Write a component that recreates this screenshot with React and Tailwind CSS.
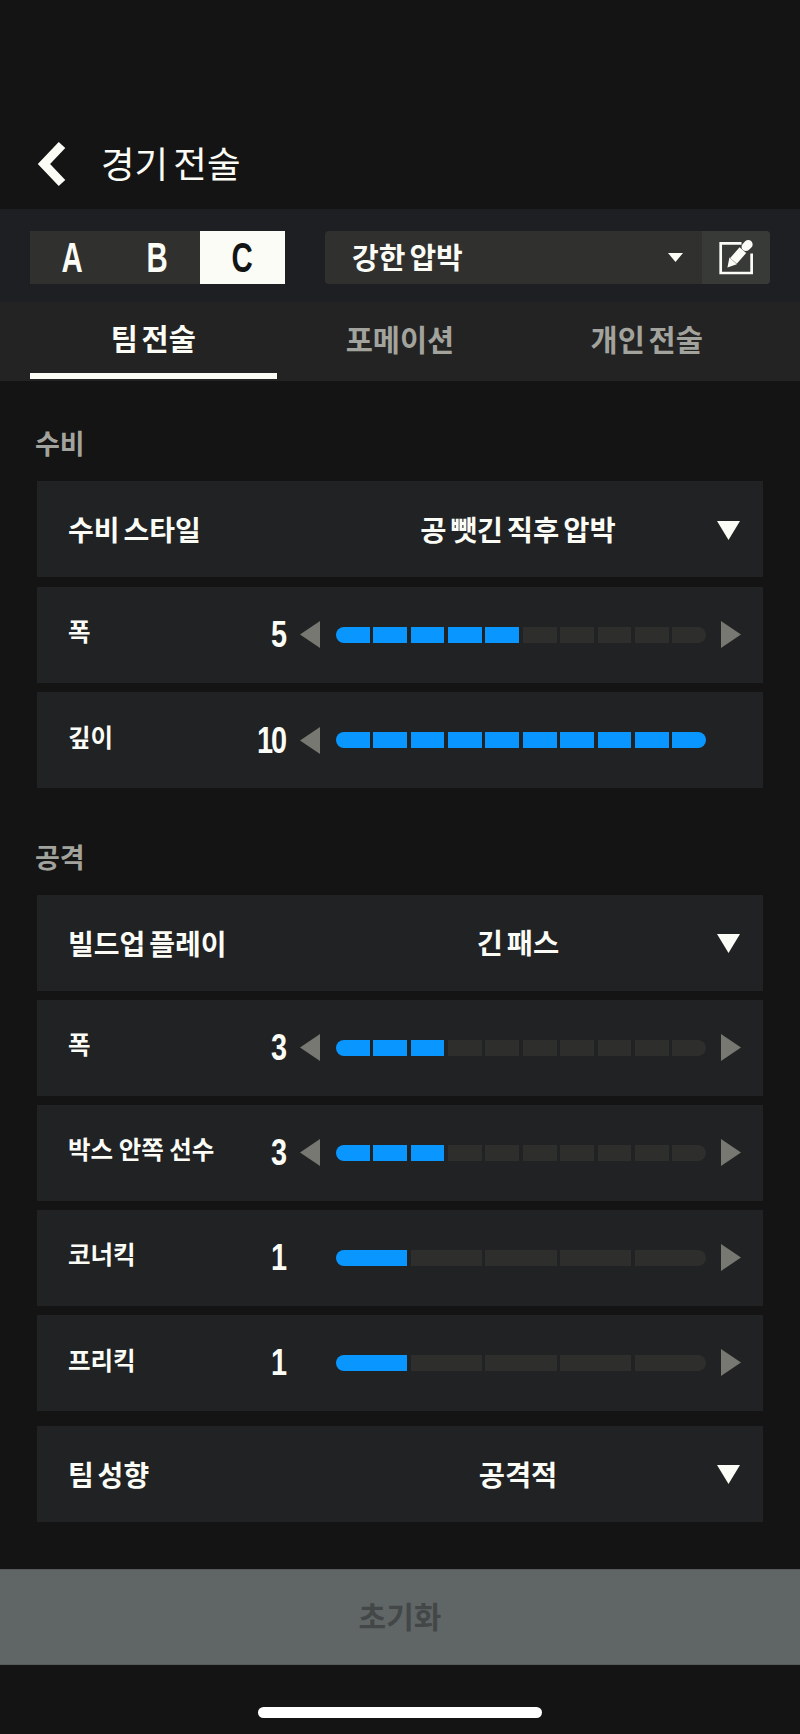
const KR = "font-['Noto_Sans_CJK_KR','Noto_Sans',sans-serif]";
const LATIN = "font-['Liberation_Sans',sans-serif]";

function Tri({ dir, className }) {
  const points = {
    left: "20,0 20,27 0,13.5",
    right: "0,0 0,27 20,13.5",
  };
  return (
    <svg viewBox="0 0 20 27" className={className}>
      <polygon points={points[dir]} fill="#787872" />
    </svg>
  );
}

function DownTri({ className }) {
  return (
    <svg viewBox="0 0 23 19" className={className}>
      <polygon points="0,0 23,0 11.5,19" fill="#fbfcf6" />
    </svg>
  );
}

function Bar({ value, steps }) {
  const cells = Array.from({ length: steps }, (_, i) => i < value);
  return (
    <div className="flex h-4 w-[370px] gap-[3.6px] overflow-hidden rounded-lg">
      {cells.map((on, i) => (
        <div key={i} className={on ? "flex-1 bg-[#0a96ff]" : "flex-1 bg-[#2e2e2c]"} />
      ))}
    </div>
  );
}

function SelectRow({ label, value }) {
  return (
    <div className="flex h-24 items-center bg-[#202224] pl-[31px] pr-[23px] text-[#fbfcf6]">
      <div className="w-[251px] text-[28px] font-bold [word-spacing:-2.5px]">{label}</div>
      <div className="flex-1 text-center text-[28.5px] font-bold [word-spacing:-2.5px]">{value}</div>
      <DownTri className="mt-0.5 h-[19px] w-[23px]" />
    </div>
  );
}

function SliderRow({ label, value, steps = 10 }) {
  return (
    <div className="flex h-24 items-center bg-[#202224] pl-[31px] pr-[22px] text-[#fbfcf6]">
      <div className="-mt-1.5 flex-1 text-[24.5px] font-bold">{label}</div>
      <div className={`${LATIN} mr-[1px] origin-right scale-x-[.78] text-[37px] leading-none font-bold tracking-[-2.5px]`}>{value}</div>
      {steps === 10 ? (
        <Tri dir="left" className="ml-3.5 h-[27px] w-5" />
      ) : (
        <div className="ml-3.5 w-5" />
      )}
      <div className="ml-4">
        <Bar value={value} steps={steps} />
      </div>
      {value < steps ? (
        <Tri dir="right" className="ml-[15px] h-[27px] w-5" />
      ) : (
        <div className="ml-[15px] w-5" />
      )}
    </div>
  );
}

function SetCell({ children, active }) {
  return (
    <div className={active ? "flex flex-1 items-center justify-center bg-[#fbfcf6] text-[#141414]" : "flex flex-1 items-center justify-center"}>
      <span className="scale-x-[.7]">{children}</span>
    </div>
  );
}

export default function App() {
  return (
    <div className={`${KR} min-h-[1734px] bg-[#141414] text-[#fbfcf6]`}>
      <header className="flex h-[209px] items-center gap-[34px] pl-[37px] pt-[119px]">
        <svg viewBox="0 0 30 46" className="h-[46px] w-[30px]">
          <polyline points="25,4 7,23 25,42" fill="none" stroke="#fbfcf6" strokeWidth="9" />
        </svg>
        <h1 className="-mt-0.5 text-[36.5px] font-normal [word-spacing:-3px]">경기 전술</h1>
      </header>

      <div className="flex h-[93px] items-center gap-[40px] bg-[#1d1f22] px-[30px] pt-[3px]">
        <div className={`${LATIN} flex h-[53px] w-[255px] overflow-hidden bg-[#30302e] text-[42px] font-bold`}>
          <SetCell>A</SetCell>
          <SetCell>B</SetCell>
          <SetCell active>C</SetCell>
        </div>
        <div className="flex h-[53px] flex-1 items-center overflow-hidden rounded-sm bg-[#30302e]">
          <div className="flex-1 pl-[27px] text-[29px] font-bold [word-spacing:-2.5px]">강한 압박</div>
          <svg viewBox="0 0 15 9" className="mr-[19px] h-[9px] w-[15px]">
            <polygon points="0,0 15,0 7.5,9" fill="#fbfcf6" />
          </svg>
          <div className="flex h-full w-[68px] items-center justify-center bg-[#383a38]">
            <svg viewBox="230 55 110 110" className="h-[37px] w-[37px]">
              <path d="M300 68H238V156H330V98" fill="none" stroke="#fbfcf6" strokeWidth="8" />
              <polygon points="258,140 264,110 286,130" fill="#fbfcf6" />
              <line x1="276" y1="120" x2="304" y2="88" stroke="#fbfcf6" strokeWidth="26" />
              <line x1="313" y1="78" x2="320" y2="71" stroke="#fbfcf6" strokeWidth="26" strokeLinecap="round" />
            </svg>
          </div>
        </div>
      </div>

      <nav className="grid h-[79px] grid-cols-3 bg-[#232323] px-[30px] text-[29.5px] font-bold [word-spacing:-3px]">
        <div className="mb-0.5 flex items-center justify-center border-b-[6px] border-[#fbfcf6]">팀 전술</div>
        <div className="flex items-center justify-center pb-1.5 text-[#a3a39e]">포메이션</div>
        <div className="flex items-center justify-center pb-1.5 text-[#a3a39e]">개인 전술</div>
      </nav>

      <main className="px-[37px]">
        <div className="mt-[45px] mb-[21px] -ml-[2px] text-[27px] leading-[34px] font-bold text-[#a3a39e]">수비</div>
        <div className="flex flex-col gap-[9.5px]">
          <SelectRow label="수비 스타일" value="공 뺏긴 직후 압박" />
          <SliderRow label="폭" value={5} />
          <SliderRow label="깊이" value={10} />
        </div>

        <div className="mt-[51.5px] mb-[21px] -ml-[2px] text-[27px] leading-[34px] font-bold text-[#a3a39e]">공격</div>
        <div className="flex flex-col gap-[9.1px]">
          <SelectRow label="빌드업 플레이" value="긴 패스" />
          <SliderRow label="폭" value={3} />
          <SliderRow label="박스 안쪽 선수" value={3} />
          <SliderRow label="코너킥" value={1} steps={5} />
          <SliderRow label="프리킥" value={1} steps={5} />
          <div className="mt-1.5">
            <SelectRow label="팀 성향" value="공격적" />
          </div>
        </div>
      </main>

      <button className="mt-[47px] flex h-24 w-full items-center justify-center border-y border-[#555a5a] bg-[#606666] pb-0.5 text-[30px] font-bold text-[#434747]">
        초기화
      </button>

      <div className="mx-auto mt-[42px] h-[11px] w-[284px] rounded-full bg-white" />
    </div>
  );
}
